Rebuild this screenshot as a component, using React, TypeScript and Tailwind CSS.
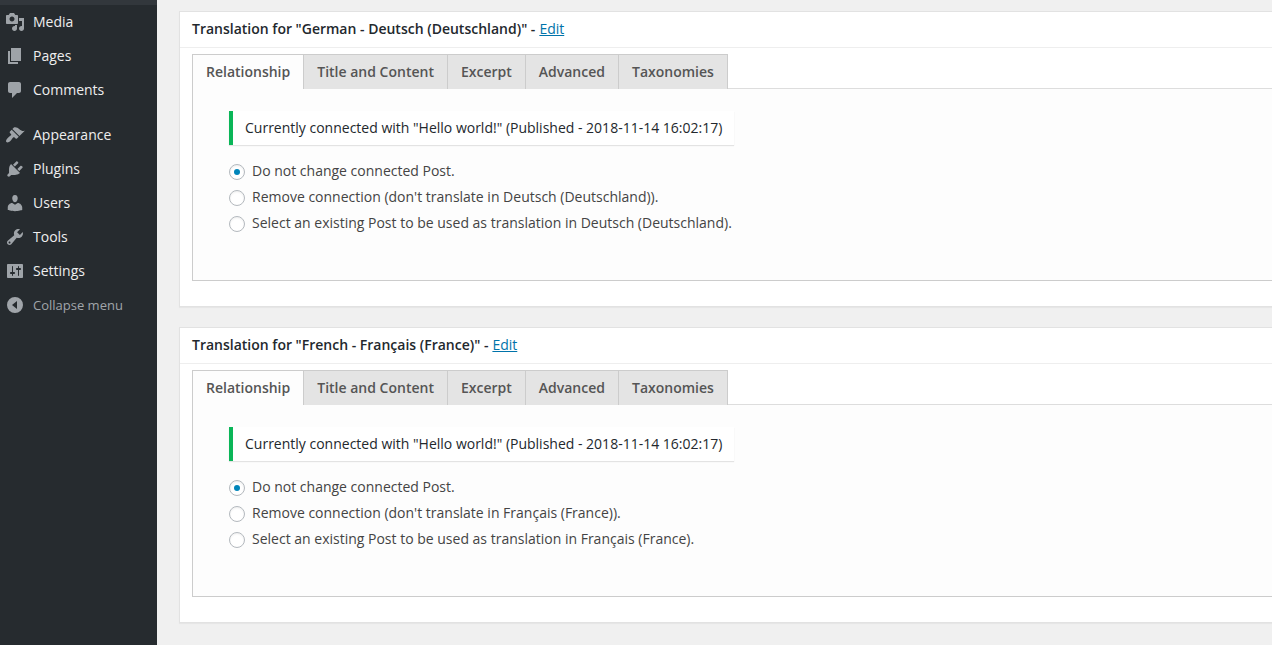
import React, { useState } from "react";
import clsx from "clsx";

const mainMenu = [
  {
    label: "Media",
    icon: "M13 11V4c0-.55-.45-1-1-1h-1.67L9 1H5L3.67 3H2c-.55 0-1 .45-1 1v7c0 .55.45 1 1 1h10c.55 0 1-.45 1-1zM7 4.5c1.38 0 2.5 1.12 2.5 2.5S8.38 9.5 7 9.5 4.5 8.38 4.5 7 5.62 4.5 7 4.5zM14 6h5v10.5c0 1.38-1.12 2.5-2.5 2.5S14 17.88 14 16.5s1.12-2.5 2.5-2.5c.17 0 .34.02.5.05V9h-3V6zm-4 8.05V13h2v3.5c0 1.38-1.12 2.5-2.5 2.5S7 17.88 7 16.5 8.12 14 9.5 14c.17 0 .34.02.5.05z",
  },
  { label: "Pages", icon: "M6 15V2h10v13H6zm-1 1h8v2H3V5h2v11z" },
  {
    label: "Comments",
    icon: "M5 2h9c1.1 0 2 .9 2 2v7c0 1.1-.9 2-2 2h-2l-5 5v-5H5c-1.1 0-2-.9-2-2V4c0-1.1.9-2 2-2z",
  },
];

const siteMenu = [
  {
    label: "Appearance",
    icon: "M14.48 11.06L7.41 3.99l1.5-1.5c.5-.56 2.3-.47 3.51.32 1.21.8 1.43 1.28 2.91 2.1 1.18.64 2.45 1.26 4.45.85zm-.71.71L6.7 4.7 4.93 6.47c-.39.39-.39 1.02 0 1.41l1.06 1.06c.39.39.39 1.03 0 1.42-.6.6-1.43 1.11-2.21 1.69-.35.26-.7.53-1.01.84C1.43 14.23.4 16.08 1.4 17.07c.99 1 2.84-.03 4.18-1.36.31-.31.58-.66.85-1.02.57-.78 1.08-1.61 1.69-2.21.39-.39 1.02-.39 1.41 0l1.06 1.06c.39.39 1.02.39 1.41 0z",
  },
  {
    label: "Plugins",
    icon: "M13.11 4.36L9.87 7.6 8 5.73l3.24-3.24c.35-.34 1.05-.2 1.56.32.52.51.66 1.21.31 1.55zm-8 1.77l.91-1.12 9.01 9.01-1.19.84c-.71.71-2.63 1.16-3.82 1.16H6.14L4.9 17.26c-.59.59-1.54.59-2.12 0-.59-.58-.59-1.53 0-2.12l1.24-1.24v-3.88c0-1.13.4-3.19 1.09-3.89zm7.26 3.97l3.24-3.24c.34-.35 1.04-.21 1.55.31.52.51.66 1.21.31 1.55l-3.24 3.25z",
  },
  {
    label: "Users",
    icon: "M10 9.25c-2.27 0-2.73-3.44-2.73-3.44C7 4.02 7.82 2 9.97 2c2.16 0 2.98 2.02 2.71 3.81 0 0-.41 3.44-2.68 3.44zm0 2.57L12.72 10c2.39 0 4.52 2.33 4.52 4.53v2.49s-3.65 1.13-7.24 1.13c-3.65 0-7.24-1.13-7.24-1.13v-2.49c0-2.25 1.94-4.48 4.47-4.48z",
  },
  {
    label: "Tools",
    icon: "M16.68 9.77c-1.34 1.34-3.3 1.67-4.95.99l-5.41 6.52c-.99.99-2.59.99-3.58 0s-.99-2.59 0-3.57l6.52-5.42c-.68-1.65-.35-3.61.99-4.95 1.28-1.28 3.12-1.62 4.72-1.06l-2.89 2.89 2.82 2.82 2.86-2.87c.53 1.58.18 3.39-1.08 4.65zM3.81 16.21c.4.39 1.04.39 1.43 0 .4-.4.4-1.04 0-1.43-.39-.4-1.03-.4-1.43 0-.39.39-.39 1.03 0 1.43z",
  },
  {
    label: "Settings",
    icon: "M18 16V4c0-.55-.45-1-1-1H3c-.55 0-1 .45-1 1v12c0 .55.45 1 1 1h14c.55 0 1-.45 1-1zM8 11h1c.55 0 1 .45 1 1s-.45 1-1 1H8v1.5c0 .28-.22.5-.5.5s-.5-.22-.5-.5V13H6c-.55 0-1-.45-1-1s.45-1 1-1h1V5.5c0-.28.22-.5.5-.5s.5.22.5.5V11zm5-2h-1c-.55 0-1-.45-1-1s.45-1 1-1h1V5.5c0-.28.22-.5.5-.5s.5.22.5.5V7h1c.55 0 1 .45 1 1s-.45 1-1 1h-1v5.5c0 .28-.22.5-.5.5s-.5-.22-.5-.5V9z",
  },
];

const collapseIcon =
  "M10 2a8 8 0 1 0 0 16 8 8 0 0 0 0-16zM12 6v8l-5-4z";

const tabs = [
  "Relationship",
  "Title and Content",
  "Excerpt",
  "Advanced",
  "Taxonomies",
];

const Icon = ({ path }: { path: string }) => (
  <svg
    viewBox="0 0 20 20"
    className="size-5 shrink-0"
    fill="currentColor"
    fillRule="evenodd"
    aria-hidden="true"
  >
    <path d={path} />
  </svg>
);

const MenuGroup = ({ items }: { items: typeof mainMenu }) => (
  <ul>
    {items.map((item) => (
      <li key={item.label}>
        <a
          href="#"
          className="flex h-[34px] items-center gap-2 pl-[5px] text-[#9ea3a8]"
        >
          <Icon path={item.icon} />
          <span className="text-[#eee]">{item.label}</span>
        </a>
      </li>
    ))}
  </ul>
);

const Sidebar = () => (
  <nav className="w-[157px] shrink-0 bg-[#262b2f]">
    <div className="h-[5px] bg-[#32373c]" />
    <MenuGroup items={mainMenu} />
    <div className="h-[11px]" />
    <MenuGroup items={siteMenu} />
    <button className="flex h-[34px] w-full items-center gap-2 pl-[5px] text-[13px] text-[#a0a5aa]">
      <Icon path={collapseIcon} />
      Collapse menu
    </button>
  </nav>
);

type BoxProps = { id: string; title: string; language: string };

const TranslationBox = ({ id, title, language }: BoxProps) => {
  const [tab, setTab] = useState(tabs[0]);
  const [choice, setChoice] = useState(0);
  const options = [
    "Do not change connected Post.",
    `Remove connection (don't translate in ${language}).`,
    `Select an existing Post to be used as translation in ${language}.`,
  ];

  return (
    <section className="border border-r-0 border-[#e2e2e2] bg-white pb-[25px] shadow-[0_1px_1px_rgba(0,0,0,0.04)]">
      <h2 className="flex h-9 items-center gap-1 border-b border-[#eee] pb-px pl-3 font-semibold text-[#23282d]">
        Translation for "{title}" -
        <a href="#" className="font-normal text-[#0073aa] underline">
          Edit
        </a>
      </h2>
      <div className="pt-[6px] pl-3">
        <div role="tablist" className="relative z-10 -mb-px flex">
          {tabs.map((name) => (
            <button
              key={name}
              role="tab"
              aria-selected={tab === name}
              onClick={() => setTab(name)}
              className={clsx(
                "h-[35px] border-t border-l border-[#ccc] px-[13px] font-semibold text-[#555] last:border-r",
                tab === name ? "bg-[#fdfdfd]" : "bg-[#e4e4e4]"
              )}
            >
              {name}
            </button>
          ))}
        </div>
        <div
          role="tabpanel"
          className="border border-r-0 border-[#ccc] border-t-[#ddd] bg-[#fdfdfd] px-9 pt-[22px] pb-11"
        >
          <p className="flex h-[34px] w-fit items-center border-l-4 border-[#0ab658] bg-white px-3 text-[#23282d] shadow-[0_1px_1px_rgba(0,0,0,0.1)]">
            Currently connected with "Hello world!" (Published - 2018-11-14
            16:02:17)
          </p>
          <div className="mt-[13px]">
            {options.map((option, i) => (
              <label key={option} className="flex h-[26px] items-center gap-[7px]">
                <input
                  type="radio"
                  name={id}
                  checked={choice === i}
                  onChange={() => setChoice(i)}
                  className="mt-px grid size-4 appearance-none place-items-center rounded-full border border-[#b4b9be] bg-white shadow-[inset_0_1px_2px_rgba(0,0,0,0.07)] before:size-[6px] before:rounded-full checked:before:bg-[#0085ba] checked:before:content-['']"
                />
                {option}
              </label>
            ))}
          </div>
        </div>
      </div>
    </section>
  );
};

const App = () => {
  return (
    <div className="flex min-h-screen bg-[#f0f0f0] font-['Open_Sans',sans-serif] text-[14px] leading-5 text-[#444]">
      <Sidebar />
      <main className="flex min-w-0 flex-1 flex-col gap-5 pt-[11px] pl-[22px]">
        <TranslationBox
          id="german"
          title="German - Deutsch (Deutschland)"
          language="Deutsch (Deutschland)"
        />
        <TranslationBox
          id="french"
          title="French - Français (France)"
          language="Français (France)"
        />
      </main>
    </div>
  );
};

export default App;
